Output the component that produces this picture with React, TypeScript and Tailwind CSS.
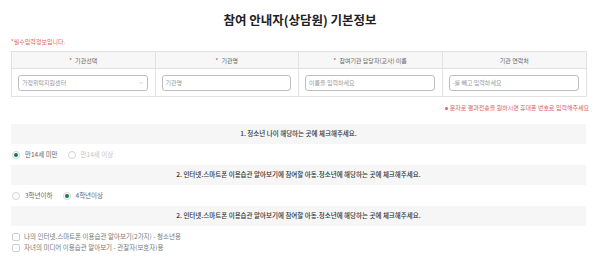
import { ChevronDown } from "lucide-react"

const font = { fontFamily: '"Noto Sans CJK KR", "Noto Sans", sans-serif' }

const columns = [
  { label: "기관선택", required: true, placeholder: "가정위탁지원센터", select: true },
  { label: "기관명", required: true, placeholder: "기관명" },
  { label: "참여기관 담당자(교사) 이름", required: true, placeholder: "이름을 입력하세요" },
  { label: "기관 연락처", required: false, placeholder: "-를 빼고 입력하세요" },
]

function SectionBar({ text }: { text: string }) {
  return (
    <div className="h-[20px] bg-[#f6f6f6] flex items-center justify-center text-[6.5px] font-medium text-[#333]">
      {text}
    </div>
  )
}

function Radio({ label, checked, dim }: { label: string; checked?: boolean; dim?: boolean }) {
  return (
    <label className="flex items-center gap-[5px]">
      <span className="w-[8px] h-[8px] rounded-full border border-[#d4d4d4] bg-white flex items-center justify-center">
        {checked && <span className="w-[4px] h-[4px] rounded-full bg-[#0f7a55]" />}
      </span>
      <span className={dim ? "text-[#c4c4c4]" : "text-[#666]"}>{label}</span>
    </label>
  )
}

function Check({ label }: { label: string }) {
  return (
    <label className="h-[11px] flex items-center gap-[4px]">
      <span className="w-[8px] h-[8px] rounded-[2px] border border-[#cfcfcf] bg-white" />
      <span className="text-[#777]">{label}</span>
    </label>
  )
}

export default function App() {
  return (
    <div className="w-[600px] h-[271px] bg-white overflow-hidden px-[11px] pt-[12px]" style={font}>
      <h1 className="text-center text-[12.5px] leading-[16px] font-bold text-[#222]">참여 안내자(상담원) 기본정보</h1>

      <p className="mt-[10px] text-[6px] leading-[8px] text-[#e06060]">*필수입력정보입니다.</p>

      <div className="mt-[5px] w-[576px] border border-[#e2e2e2]">
        <div className="grid grid-cols-4 h-[17px] bg-[#f7f7f7] border-b border-[#e2e2e2]">
          {columns.map((c, i) => (
            <div
              key={c.label}
              className={`flex items-center justify-center text-[6px] text-[#666] ${i < 3 ? "border-r border-[#e2e2e2]" : ""}`}
            >
              {c.required && <span className="text-[#e8403c] mr-[3px]">*</span>}
              {c.label}
            </div>
          ))}
        </div>
        <div className="grid grid-cols-4 h-[27px]">
          {columns.map((c, i) => (
            <div
              key={c.label}
              className={`flex items-center pl-[6px] pr-[7px] ${i < 3 ? "border-r border-[#e2e2e2]" : ""}`}
            >
              <div className="w-full h-[16px] rounded-[3px] border border-[#bdbdbd] flex items-center justify-between px-[3px] text-[6px] text-[#999]">
                <span>{c.placeholder}</span>
                {c.select && <ChevronDown className="w-[6px] h-[6px] text-[#aaa]" strokeWidth={2} />}
              </div>
            </div>
          ))}
        </div>
      </div>

      <p className="mt-[7px] flex items-center justify-end gap-[2px] text-[6px] leading-[8px] text-[#e06060]">
        <span className="w-[3px] h-[3px] rounded-full bg-[#e06060]" />
        문자로 결과전송을 원하시면 휴대폰 번호로 입력해주세요
      </p>

      <div className="mt-[12px] w-[575px] text-[6.5px]">
        <SectionBar text="1. 청소년 나이 해당하는 곳에 체크해주세요." />
        <div className="h-[21px] flex items-center gap-[10px] pl-[1px]">
          <Radio label="만14세 미만" checked />
          <Radio label="만14세 이상" dim />
        </div>

        <SectionBar text="2. 인터넷.스마트폰 이용습관 알아보기에 참여할 아동.청소년에 해당하는 곳에 체크해주세요." />
        <div className="h-[21px] flex items-center gap-[10px] pl-[1px]">
          <Radio label="3학년이하" />
          <Radio label="4학년이상" checked />
        </div>

        <SectionBar text="2. 인터넷.스마트폰 이용습관 알아보기에 참여할 아동.청소년에 해당하는 곳에 체크해주세요." />
        <div className="pt-[5px] pl-[1px]">
          <Check label="나의 인터넷.스마트폰 이용습관 알아보기(2가지) - 청소년용" />
          <Check label="자녀의 미디어 이용습관 알아보기 - 관찰자(보호자)용" />
        </div>
      </div>
    </div>
  )
}
